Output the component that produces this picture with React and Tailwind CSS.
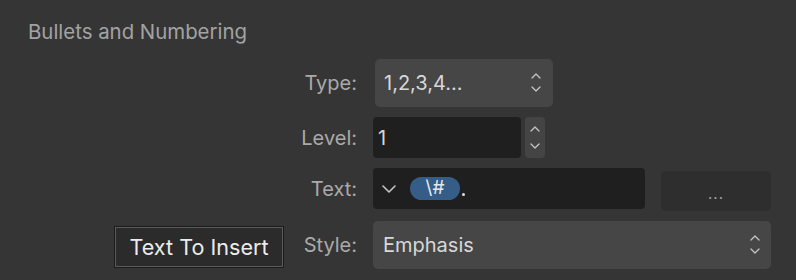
import React from "react";

const font = { fontFamily: "Inter, 'Noto Sans', sans-serif" };

function UpDown({ tall = false }) {
  if (tall) {
    return (
      <svg width="10" height="23" viewBox="0 0 10 23" fill="none" stroke="#c4c4c4" strokeWidth="1.3" strokeLinecap="round" strokeLinejoin="round">
        <path d="M1 5 L5 1 L9 5" />
        <path d="M1 18 L5 22 L9 18" />
      </svg>
    );
  }
  return (
    <svg width="10" height="20" viewBox="0 0 10 20" fill="none" stroke="#c4c4c4" strokeWidth="1.3" strokeLinecap="round" strokeLinejoin="round">
      <path d="M1 5 L5 1 L9 5" />
      <path d="M1 14 L5 18 L9 14" />
    </svg>
  );
}

function Label({ children }) {
  return (
    <div className="w-[357px] shrink-0 text-right text-[20px] text-[#aaaaaa]">
      {children}
    </div>
  );
}

export default function App() {
  return (
    <div
      className="relative w-[796px] h-[280px] overflow-hidden bg-[#353535] select-none"
      style={font}
    >
      <div className="pl-[28px] pt-[20px] text-[20.4px] leading-[24px] text-[#a3a3a3]">
        Bullets and Numbering
      </div>

      <div className="mt-[15px] flex flex-col">
        {/* Type */}
        <div className="flex items-center h-[48px]">
          <Label>Type:</Label>
          <div className="ml-[18px] w-[178px] h-[48px] rounded-[5px] bg-[#464646] flex items-center justify-between pl-[9px] pr-[12px]">
            <span className="text-[20px] text-[#d8d8d8]">1,2,3,4...</span>
            <UpDown />
          </div>
        </div>

        {/* Level */}
        <div className="mt-[10px] flex items-center h-[41px]">
          <Label>Level:</Label>
          <div className="ml-[16px] w-[148px] h-[41px] rounded-[4px] bg-[#1f1f1f] flex items-center pl-[5px]">
            <span className="text-[20px] text-[#d8d8d8]">1</span>
          </div>
          <div className="ml-[4px] w-[20px] h-[41px] rounded-[4px] bg-[#444444] flex items-center justify-center">
            <UpDown tall />
          </div>
        </div>

        {/* Text */}
        <div className="mt-[10px] flex items-start h-[41px]">
          <div className="h-[41px] flex items-center">
            <Label>Text:</Label>
          </div>
          <div className="ml-[16px] w-[272px] h-[41px] rounded-[4px] bg-[#1f1f1f] flex items-center pl-[9px]">
            <svg width="14" height="8" viewBox="0 0 14 8" fill="none" stroke="#c4c4c4" strokeWidth="1.6" strokeLinecap="round" strokeLinejoin="round">
              <path d="M1 1 L7 7 L13 1" />
            </svg>
            <div className="ml-[14px] w-[50px] h-[23px] rounded-full bg-[#365c88] flex items-center justify-center text-[19px] text-[#e2e8ef]">
              \#
            </div>
            <span className="ml-[2px] mt-[12px] w-[3px] h-[3px] rounded-full bg-[#e0e0e0]" />
          </div>
          <div className="ml-[16px] mt-[3px] w-[110px] h-[40px] rounded-[5px] bg-[#2e2e2e] flex items-center justify-center">
            <span className="text-[15px] leading-none text-[#a0a0a0] mt-[4px] tracking-[1px]">...</span>
          </div>
        </div>

        {/* Style */}
        <div className="mt-[12px] flex items-center h-[48px]">
          <Label>Style:</Label>
          <div className="ml-[16px] w-[398px] h-[48px] rounded-[5px] bg-[#464646] flex items-center justify-between pl-[10px] pr-[11px]">
            <span className="text-[20px] text-[#d8d8d8]">Emphasis</span>
            <UpDown />
          </div>
        </div>
      </div>

      {/* Tooltip */}
      <div className="absolute left-[115px] top-[227px] w-[168px] h-[40px] bg-[#2a2b2a] border border-[#5c5c5c] shadow-[0_0_0_1px_#1a1a1a] flex items-center justify-center">
        <span className="text-[21.6px] text-[#ececec]">Text To Insert</span>
      </div>
    </div>
  );
}
